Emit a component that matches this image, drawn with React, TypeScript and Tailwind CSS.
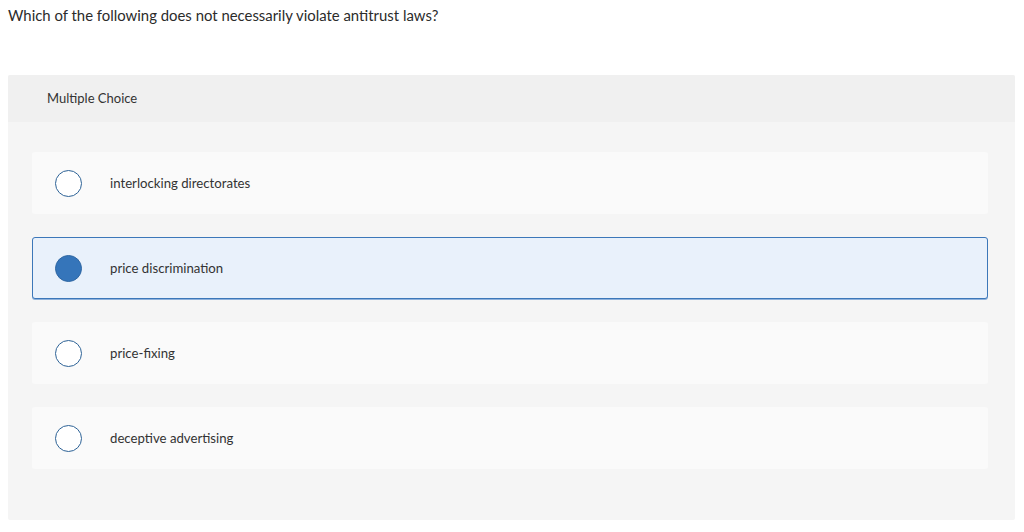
import { useState } from 'react'

const OPTIONS = [
  'interlocking directorates',
  'price discrimination',
  'price-fixing',
  'deceptive advertising',
]

export default function App() {
  const [selected, setSelected] = useState(1)

  return (
    <div className="min-h-[532px] bg-white text-[#333] font-['Lato',sans-serif]">
      <p className="px-2 pt-[6px] text-[14.9px] leading-[18px] text-[#2b2b2b]">
        Which of the following does not necessarily violate antitrust laws?
      </p>

      <div className="mx-2 mt-[51px] w-[1007px] rounded-[2px] bg-[#f5f5f5] pb-[51px]">
        {/* Header */}
        <div className="flex h-[47px] items-center rounded-t-[2px] bg-[#f0f0f0] pl-[39px] text-[13px] text-[#333]">
          Multiple Choice
        </div>

        {/* Options */}
        <div className="flex flex-col gap-[23px] pl-6 pr-[27px] pt-[30px]">
          {OPTIONS.map((opt, i) => {
            const isSel = i === selected
            return (
              <button
                key={opt}
                onClick={() => setSelected(i)}
                className={`flex h-[62px] items-center rounded-[3px] text-left ${
                  isSel ? 'border border-[#3c77b9] bg-[#e9f1fb] shadow-[0_1px_0_#8fb2dc]' : 'border border-transparent bg-[#fafafa]'
                }`}
              >
                <span
                  className={`ml-[22px] block h-[27px] w-[27px] shrink-0 rounded-full border ${
                    isSel ? 'border-[#2f67a3] bg-[#3575ba]' : 'border-[#2d6296] bg-white'
                  }`}
                />
                <span className="ml-[28px] pt-[2px] text-[13.2px] text-[#333]">{opt}</span>
              </button>
            )
          })}
        </div>
      </div>
    </div>
  )
}
